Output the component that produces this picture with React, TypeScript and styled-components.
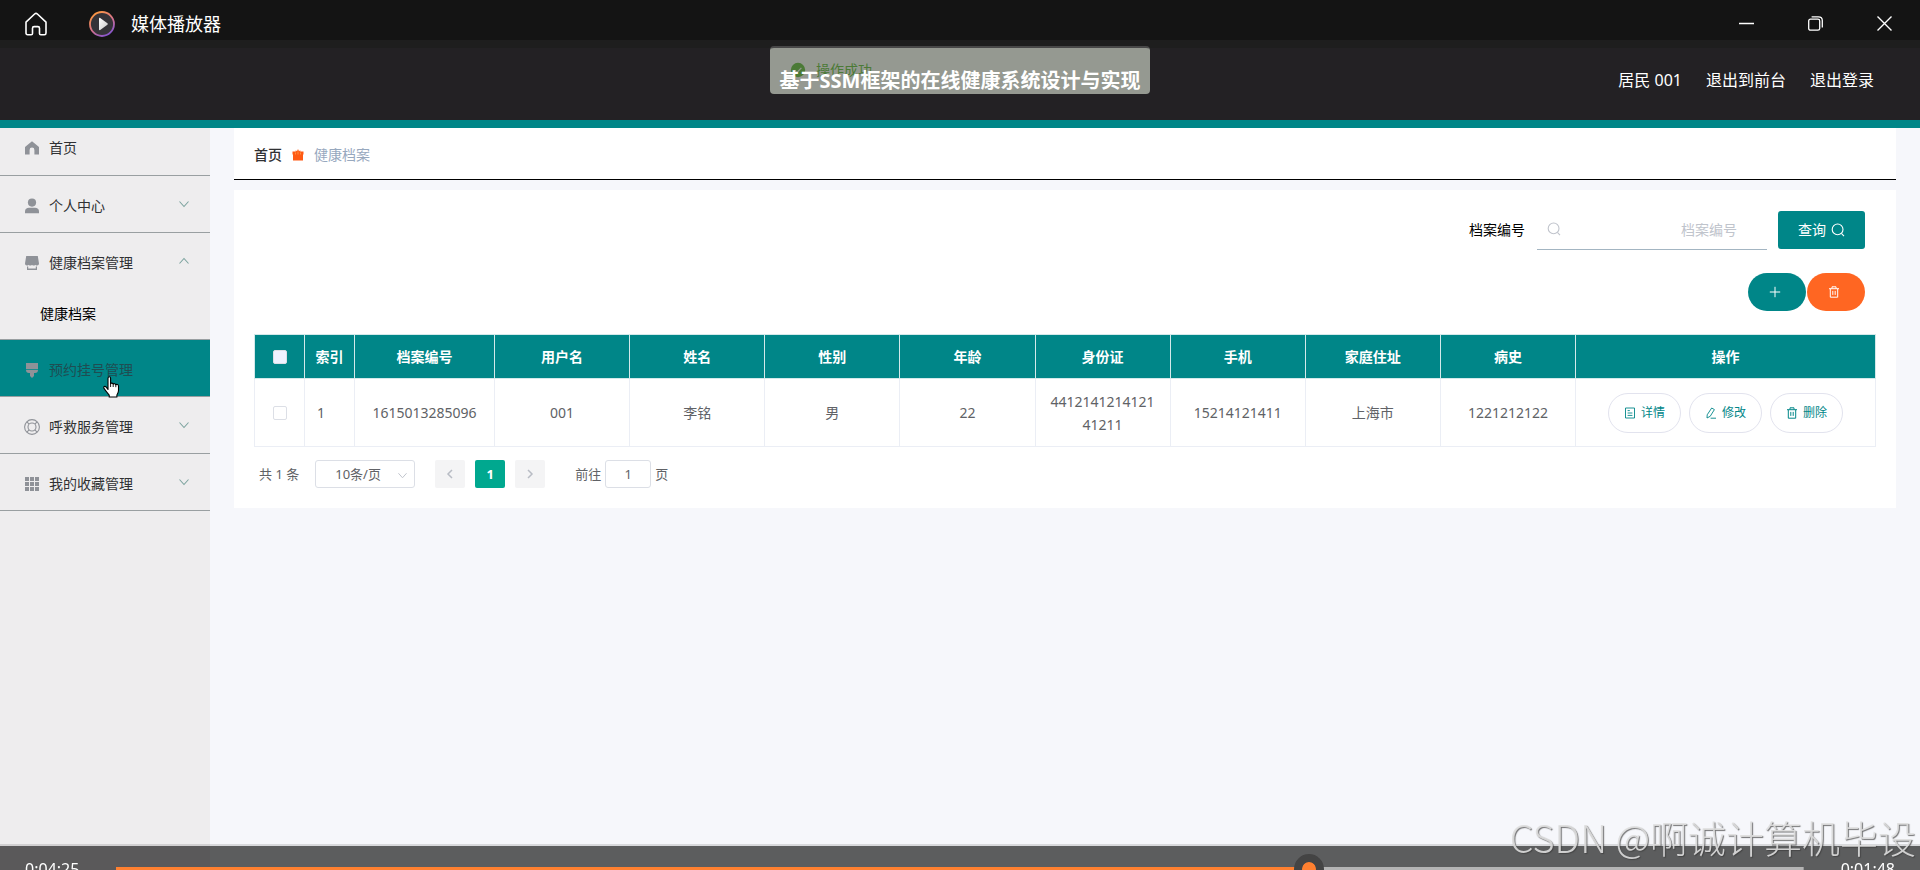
import React from "react";
import styled, { createGlobalStyle } from "styled-components";

const TEAL = "#008688";

const GlobalStyle = createGlobalStyle`
  *, *::before, *::after { box-sizing: border-box; }
  body {
    margin: 0;
    font-family: "Noto Sans", "Noto Sans CJK SC", sans-serif;
    font-size: 14px;
    line-height: 20px;
    color: #303133;
    background: #f6f7fb;
  }
  button, input, select { font: inherit; margin: 0; }
  button { padding: 0; border: 0; background: none; cursor: pointer; }
  a { color: inherit; text-decoration: none; }
  ul { list-style: none; margin: 0; padding: 0; }
  svg { display: block; flex: none; }
`;

const Page = styled.div`
  position: relative;
  display: flex;
  flex-direction: column;
  min-height: 100vh;
`;

/* player window */

const TitleBar = styled.div`
  display: flex;
  align-items: center;
  height: 48px;
  padding: 7px 28px 0 25px;
  background: #141414;
  border-bottom: 8px solid #1e1e1e;
  color: #fff;
`;

const AppName = styled.span`
  display: flex;
  align-items: center;
  gap: 16px;
  margin-left: 42px;
  font-size: 18px;
  line-height: 24px;
`;

const WindowControls = styled.div`
  display: flex;
  gap: 54px;
  margin-left: auto;
`;

const TitleButton = styled.button`
  color: #fff;
`;

const PlayerBar = styled.div`
  position: fixed;
  left: 0;
  right: 0;
  bottom: 0;
  height: 26px;
  overflow: hidden;
  border-top: 2px solid rgba(0, 0, 0, 0.12);
  background: rgba(16, 16, 16, 0.67);
  background-clip: padding-box;
`;

const PlayerRow = styled.div`
  display: flex;
  align-items: center;
  gap: 37px;
  height: 30px;
  margin-top: 8px;
  padding: 0 25px;
  color: #fff;
  font-size: 16px;
  line-height: 24px;
`;

const Seek = styled.input`
  flex: 1;
  min-width: 0;
  height: 30px;
  appearance: none;
  background: linear-gradient(90deg, #ff8030 71%, #b4b4b4 71%) center / 100% 4px no-repeat;

  &::-webkit-slider-thumb {
    appearance: none;
    width: 30px;
    height: 30px;
    border: 8px solid #444;
    border-radius: 50%;
    background: #ff8030;
    background-clip: padding-box;
    box-shadow: inset 0 0 0 8px #ff8030;
  }
`;

const Watermark = styled.div`
  position: fixed;
  right: 4px;
  bottom: 9px;
  font-family: "Noto Sans CJK SC", sans-serif;
  font-size: 38px;
  font-weight: 300;
  line-height: 48px;
  color: rgba(222, 222, 222, 0.9);
  text-shadow: 1px 1px 1px rgba(60, 60, 60, 0.7);
  pointer-events: none;
`;

/* application header */

const Header = styled.header`
  display: grid;
  grid-template-columns: 1fr auto 1fr;
  align-items: center;
  height: 80px;
  padding: 0 46px 6px;
  background: #232124;
  border-bottom: 8px solid ${TEAL};
  color: #fff;
`;

const Title = styled.h1`
  position: relative;
  z-index: 2;
  grid-column: 2;
  margin: 0;
  font-size: 20px;
  line-height: 30px;
`;

const UserNav = styled.nav`
  display: flex;
  justify-content: flex-end;
  gap: 24px;
  padding-bottom: 2px;
  font-size: 16px;
`;

const Toast = styled.div`
  position: absolute;
  z-index: 1;
  top: 46px;
  left: 50%;
  width: 380px;
  height: 48px;
  margin-left: -190px;
  padding: 12px 0 0 20px;
  display: flex;
  align-items: flex-start;
  gap: 10px;
  border-top: 2px solid #484848;
  border-radius: 4px;
  background: #959991;
  color: #4b7a36;

  svg { margin-top: 2px; }
`;

/* sidebar */

const Body = styled.div`
  display: flex;
  flex: 1;
`;

const Sidebar = styled.nav`
  flex: none;
  width: 210px;
  background: #eeedee;
`;

const MenuItem = styled.li<{ $active?: boolean }>`
  position: relative;
  border-bottom: 1px solid #999fa1;
  background: ${(p) => (p.$active ? TEAL : "transparent")};
  color: ${(p) => (p.$active ? "#1f4d52" : "#303133")};
`;

const MenuLink = styled.a<{ $first?: boolean }>`
  display: flex;
  align-items: center;
  gap: 9px;
  height: ${(p) => (p.$first ? 47 : 56)}px;
  padding: ${(p) => (p.$first ? "0 21px 7px 24px" : "3px 21px 0 24px")};

  > svg:first-child { color: #8f9298; }
  > svg:last-child { margin: -4px 0 0 auto; color: #7da49f; }
`;

const SubLink = styled.a`
  display: flex;
  align-items: center;
  height: 50px;
  padding-left: 40px;
  color: #000;
`;

const HandCursor = styled.svg`
  position: absolute;
  left: 102px;
  top: 36px;
`;

/* content */

const Main = styled.main`
  flex: 1;
  min-width: 0;
  padding: 0 24px 60px;
`;

const Breadcrumb = styled.nav`
  display: flex;
  align-items: center;
  gap: 10px;
  height: 52px;
  padding: 2px 20px 0;
  margin-bottom: 10px;
  background: #fff;
  border-bottom: 1px solid #000;
`;

const Current = styled.span`
  color: #97a8be;
`;

const Home = styled.a`
  font-weight: 500;
`;

const Card = styled.section`
  padding: 21px 20px 20px;
  background: #fff;
`;

const Toolbar = styled.div`
  display: flex;
  align-items: center;
  justify-content: flex-end;
  height: 38px;
  margin-bottom: 24px;
  padding-right: 11px;
`;

const SearchLabel = styled.label`
  margin-right: 12px;
  color: #000;
`;

const SearchBox = styled.div`
  position: relative;
  width: 230px;
  margin-right: 11px;
  color: #c0c4cc;

  svg { position: absolute; left: 10px; top: 11px; }
`;

const SearchInput = styled.input`
  display: block;
  width: 100%;
  height: 39px;
  padding: 0 30px;
  border: 0;
  border-bottom: 1px solid #a3b5c2;
  background: transparent;
  text-align: right;

  &::placeholder { color: #c0c4cc; }
`;

const QueryButton = styled.button`
  display: flex;
  align-items: center;
  justify-content: center;
  gap: 5px;
  width: 87px;
  height: 38px;
  border-radius: 3px;
  background: ${TEAL};
  color: #fff;
`;

const PillButton = styled.button<{ $color: string }>`
  display: flex;
  align-items: center;
  justify-content: center;
  width: 58px;
  height: 38px;
  margin-left: 1px;
  padding-right: 4px;
  border-radius: 20px;
  background: ${(p) => p.$color};
  color: #fff;
`;

const Table = styled.table`
  width: 100%;
  margin-top: -1px;
  table-layout: fixed;
  border-collapse: collapse;
  text-align: center;

  th {
    height: 44px;
    padding: 0;
    border: 1px solid #d3e9ea;
    background: ${TEAL};
    color: #fff;
    font-weight: 700;
  }
  td {
    height: 68px;
    padding: 0 12px;
    border: 1px solid #ebeef5;
    color: #606266;
    line-height: 23px;
    word-break: break-all;
  }
`;

const Col = styled.col<{ $w?: number }>`
  width: ${(p) => (p.$w ? `${p.$w}px` : "auto")};
`;

const IndexCell = styled.td`
  text-align: left;
`;

const Check = styled.input<{ $onTeal?: boolean }>`
  appearance: none;
  display: block;
  width: 14px;
  height: 14px;
  margin: 0 auto !important;
  border: 1px solid #dcdfe6;
  border-radius: 2px;
  background: ${(p) => (p.$onTeal ? "#eef2ff" : "#fff")};
`;

const Actions = styled.div`
  display: flex;
  justify-content: center;
  gap: 8px;
`;

const ActionButton = styled.button`
  display: flex;
  align-items: center;
  justify-content: center;
  gap: 5px;
  width: 73px;
  height: 40px;
  border: 1px solid #e2e3ee;
  border-radius: 20px;
  color: ${TEAL};
  font-size: 12px;
`;

const Pager = styled.div`
  display: flex;
  align-items: center;
  height: 28px;
  margin-top: 13px;
  padding-left: 5px;
  color: #606266;
  font-size: 13px;
`;

const SizeBox = styled.div`
  position: relative;
  width: 100px;
  margin: 0 20px 0 16px;
  color: #c0c4cc;

  svg { position: absolute; right: 8px; top: 11px; }
`;

const SizeSelect = styled.select`
  display: block;
  appearance: none;
  width: 100%;
  height: 28px;
  padding: 0 20px 0 19px;
  border: 1px solid #dcdfe6;
  border-radius: 3px;
  background: #fff;
  color: #606266;
  text-align: left;
`;

const PageButton = styled.button<{ $current?: boolean }>`
  display: flex;
  align-items: center;
  justify-content: center;
  width: 30px;
  height: 28px;
  margin-right: 10px;
  border-radius: 2px;
  background: ${(p) => (p.$current ? "#00a88f" : "#f4f4f5")};
  color: ${(p) => (p.$current ? "#fff" : "#b8bcc4")};
  font-weight: 700;
`;

const Jump = styled.label`
  display: flex;
  align-items: center;
  gap: 4px;
  margin-left: 20px;
`;

const JumpInput = styled.input`
  width: 46px;
  height: 28px;
  border: 1px solid #dcdfe6;
  border-radius: 3px;
  color: #606266;
  text-align: center;
`;

/* icons */

const Chevron = ({ dir = "down", size = 10 }: { dir?: "down" | "up" | "left" | "right"; size?: number }) => {
  const paths = {
    down: "M0.5 2.5 5 7.5 9.5 2.5",
    up: "M0.5 7.5 5 2.5 9.5 7.5",
    left: "M7 1 3 5 7 9",
    right: "M3 1 7 5 3 9",
  };
  const heavy = dir === "left" || dir === "right";
  return (
    <svg width={size} height={size} viewBox="0 0 10 10" fill="none" stroke="currentColor" strokeWidth={heavy ? 1.5 : 1.1}>
      <path d={paths[dir]} />
    </svg>
  );
};

const SearchIcon = () => (
  <svg width="14" height="14" viewBox="0 0 14 14" fill="none" stroke="currentColor" strokeWidth="1.1">
    <circle cx="6.6" cy="6.4" r="5.4" />
    <path d="m10.4 10.4 2.6 2.8" />
  </svg>
);

const TrashIcon = ({ size = 12 }: { size?: number }) => (
  <svg width={size} height={size} viewBox="0 0 12 12" fill="none" stroke="currentColor">
    <path d="M1 2.7h10M4 2.5V.8h4v1.7M2.3 2.9v8.3h7.4V2.9M4.8 4.9v4M7.2 4.9v4" />
  </svg>
);

const DetailIcon = () => (
  <svg width="12" height="12" viewBox="0 0 12 12" fill="none" stroke="currentColor">
    <path d="M1.5 1h9v10h-9zM3.6 3.6h2.2M3.6 6h4.8M3.6 8.4h4.8" strokeWidth="0.9" />
  </svg>
);

const EditIcon = () => (
  <svg width="12" height="12" viewBox="0 0 12 12" fill="none" stroke="currentColor" strokeWidth="0.9">
    <path d="M6.7 1 9.4 2.6 5.2 9.3 2 11 2.2 7.8zM5.6 11.2H11" />
  </svg>
);

const menuIcons: Record<string, React.ReactNode> = {
  home: <path fill="currentColor" d="M8 1.2 15 7v7.6h-4.6V10a2.4 2.4 0 0 0-4.8 0v4.6H1V7z" />,
  user: (
    <g fill="currentColor">
      <circle cx="8" cy="4.6" r="4.1" />
      <path d="M1 15.2v-2C1 11 2.6 9.8 5 9.8h6c2.4 0 4 1.2 4 3.4v2z" />
    </g>
  ),
  shop: (
    <g fill="currentColor">
      <path d="M2.2 1h11.6L15 8.5c0 1.3-.9 2-1.9 2s-1.7-.8-1.7-.8-.8.8-1.7.8S8 9.7 8 9.7s-.8.8-1.7.8-1.7-.8-1.7-.8-.7.8-1.7.8-1.9-.7-1.9-2z" />
      <path d="M3 11.6h1.2v2h7.6v-2H13V15H3z" />
    </g>
  ),
  brush: (
    <path fill="currentColor" d="M2 1h12v6.2H2zM2 8h12c0 2-1 3-3 3h-1v3l-2 2-2-2v-3H5c-2 0-3-1-3-3z" />
  ),
  help: (
    <g fill="none" stroke="currentColor" strokeWidth="1.1">
      <circle cx="8" cy="8" r="7.4" />
      <circle cx="8" cy="8" r="4" />
      <path d="m2.8 2.8 2.4 2.4M13.2 2.8l-2.4 2.4M2.8 13.2l2.4-2.4M13.2 13.2l-2.4-2.4" />
    </g>
  ),
  grid: (
    <path
      fill="currentColor"
      d="M1 1h4v4H1zM6 1h4v4H6zM11 1h4v4h-4zM1 6h4v4H1zM6 6h4v4H6zM11 6h4v4h-4zM1 11h4v4H1zM6 11h4v4H6zM11 11h4v4h-4z"
    />
  ),
};

const MenuIcon = ({ name }: { name: string }) => (
  <svg width="16" height="16" viewBox="0 0 16 16">{menuIcons[name]}</svg>
);

type Entry = { icon: string; label: string; arrow?: "down" | "up"; child?: string; active?: boolean };

const menu: Entry[] = [
  { icon: "home", label: "首页" },
  { icon: "user", label: "个人中心", arrow: "down" },
  { icon: "shop", label: "健康档案管理", arrow: "up", child: "健康档案" },
  { icon: "brush", label: "预约挂号管理", active: true },
  { icon: "help", label: "呼救服务管理", arrow: "down" },
  { icon: "grid", label: "我的收藏管理", arrow: "down" },
];

const fields = ["档案编号", "用户名", "姓名", "性别", "年龄", "身份证", "手机", "家庭住址", "病史"];
const record = ["1615013285096", "001", "李铭", "男", "22", "441214121412141211", "15214121411", "上海市", "1221212122"];

export default function App() {
  return (
    <Page>
      <GlobalStyle />
      <TitleBar>
        <TitleButton aria-label="主页">
          <svg width="22" height="24" viewBox="0 0 22 24" fill="none" stroke="currentColor" strokeWidth="1.6" strokeLinejoin="round">
            <path d="M1 10.2 9.6 2c.9-.8 1.9-.8 2.8 0L21 10.2V21c0 1-.6 1.7-1.6 1.7h-3.6c-.8 0-1.3-.5-1.3-1.3v-5.2c0-1-.6-1.6-1.6-1.6H9.1c-1 0-1.6.6-1.6 1.6v5.2c0 .8-.5 1.3-1.3 1.3H2.6C1.6 22.7 1 22 1 21z" />
          </svg>
        </TitleButton>
        <AppName>
          <svg width="26" height="26" viewBox="0 0 26 26">
            <defs>
              <linearGradient id="ring" x1="0.2" y1="0" x2="0.8" y2="1">
                <stop offset="0" stopColor="#ff9a3c" />
                <stop offset="0.5" stopColor="#d9748a" />
                <stop offset="1" stopColor="#7d52d6" />
              </linearGradient>
              <linearGradient id="play" x1="0" y1="0" x2="1" y2="1">
                <stop offset="0" stopColor="#fff" />
                <stop offset="1" stopColor="#c8c8c8" />
              </linearGradient>
            </defs>
            <circle cx="13" cy="13" r="12" fill="#343338" stroke="url(#ring)" strokeWidth="1.8" />
            <path d="M10 7.6c0-.7.6-1 1.2-.7l7.2 5.4c.5.4.5 1 0 1.4l-7.2 5.4c-.6.3-1.2 0-1.2-.7z" fill="url(#play)" />
          </svg>
          媒体播放器
        </AppName>
        <WindowControls>
          <TitleButton aria-label="最小化">
            <svg width="15" height="15" viewBox="0 0 15 15" stroke="currentColor" strokeWidth="1.5"><path d="M0 7.5h15" /></svg>
          </TitleButton>
          <TitleButton aria-label="还原">
            <svg width="15" height="15" viewBox="0 0 15 15" fill="none" stroke="currentColor" strokeWidth="1.3">
              <rect x="0.7" y="3.2" width="11" height="11" rx="1.8" />
              <path d="M3.6.8h6.8c2.3 0 3.9 1.5 3.9 3.8v6.8" />
            </svg>
          </TitleButton>
          <TitleButton aria-label="关闭">
            <svg width="15" height="15" viewBox="0 0 15 15" stroke="currentColor" strokeWidth="1.4"><path d="m.5.5 14 14M14.5.5l-14 14" /></svg>
          </TitleButton>
        </WindowControls>
      </TitleBar>

      <Header>
        <Title>基于SSM框架的在线健康系统设计与实现</Title>
        <UserNav>
          <span>居民 001</span>
          <a href="#front">退出到前台</a>
          <a href="#logout">退出登录</a>
        </UserNav>
      </Header>
      <Toast role="status">
        <svg width="16" height="16" viewBox="0 0 16 16">
          <circle cx="8" cy="8" r="7.2" fill="currentColor" />
          <path d="m4.6 8.2 2.4 2.3 4.4-4.6" fill="none" stroke="#959991" strokeWidth="1.2" />
        </svg>
        操作成功
      </Toast>

      <Body>
        <Sidebar>
          <ul>
            {menu.map((m, i) => (
              <MenuItem key={m.label} $active={m.active}>
                <MenuLink href="#menu" $first={i === 0}>
                  <MenuIcon name={m.icon} />
                  <span>{m.label}</span>
                  {m.arrow && <Chevron dir={m.arrow} />}
                </MenuLink>
                {m.child && <SubLink href="#records">{m.child}</SubLink>}
                {m.active && (
                  <HandCursor width="18" height="22" viewBox="0 0 18 22" fill="#fff" stroke="#000" strokeWidth="1.1" strokeLinejoin="round">
                    <path d="M6 13.5V2.3C6 .3 8.6.3 8.6 2.3v5.5c.2-1 2.4-1 2.6.4.5-.9 2.4-.6 2.6.6.7-.7 2.6-.4 2.7 1.2v4.5c0 2.2-1.2 3.4-1.6 4.5v2H7.2v-1.8C5.4 17 3.4 14.6 2 12.4c-1-1.8.9-2.7 2.2-1.3z" />
                    <path d="M8.6 7.8v3.2M11.2 8.2v2.8M13.8 8.8v2.4" fill="none" strokeWidth="0.9" />
                  </HandCursor>
                )}
              </MenuItem>
            ))}
          </ul>
        </Sidebar>

        <Main>
          <Breadcrumb>
            <Home href="#home">首页</Home>
            <svg width="12" height="12" viewBox="0 0 12 12">
              <path d="M.5 2.6h3.2V1.2L5 2.200 6 0l1 2.200 1.300-1v1.400h3.200v2.800H11v6.100H1V5.400H.5z" fill="#ff5a14" />
              <path d="M3.500 3.500v2M6 2.500v3M8.500 3.500v2" stroke="#ffa04a" strokeWidth="0.8" />
            </svg>
            <Current>健康档案</Current>
          </Breadcrumb>

          <Card>
            <Toolbar>
              <SearchLabel htmlFor="record-no">档案编号</SearchLabel>
              <SearchBox>
                <SearchIcon />
                <SearchInput id="record-no" placeholder="档案编号" />
              </SearchBox>
              <QueryButton>查询<SearchIcon /></QueryButton>
            </Toolbar>
            <Toolbar>
              <PillButton $color={TEAL} aria-label="新增">
                <svg width="12" height="12" viewBox="0 0 12 12" stroke="currentColor"><path d="M6 .8v10.4M.8 6h10.4" /></svg>
              </PillButton>
              <PillButton $color="#ff6622" aria-label="删除"><TrashIcon /></PillButton>
            </Toolbar>

            <Table>
              <colgroup>
                <Col $w={50} />
                <Col $w={50} />
                <Col $w={140} />
                {fields.slice(1).map((f) => <Col key={f} />)}
                <Col $w={300} />
              </colgroup>
              <thead>
                <tr>
                  <th><Check type="checkbox" $onTeal aria-label="全选" /></th>
                  <th>索引</th>
                  {fields.map((f) => <th key={f}>{f}</th>)}
                  <th>操作</th>
                </tr>
              </thead>
              <tbody>
                <tr>
                  <td><Check type="checkbox" aria-label="选择第1行" /></td>
                  <IndexCell>1</IndexCell>
                  {record.map((v) => <td key={v}>{v}</td>)}
                  <td>
                    <Actions>
                      <ActionButton><DetailIcon />详情</ActionButton>
                      <ActionButton><EditIcon />修改</ActionButton>
                      <ActionButton><TrashIcon />删除</ActionButton>
                    </Actions>
                  </td>
                </tr>
              </tbody>
            </Table>

            <Pager>
              <span>共 1 条</span>
              <SizeBox>
                <SizeSelect aria-label="每页条数" defaultValue="10">
                  <option value="10">10条/页</option>
                  <option value="20">20条/页</option>
                </SizeSelect>
                <Chevron size={9} />
              </SizeBox>
              <PageButton aria-label="上一页"><Chevron dir="left" /></PageButton>
              <PageButton $current>1</PageButton>
              <PageButton aria-label="下一页"><Chevron dir="right" /></PageButton>
              <Jump>
                前往
                <JumpInput defaultValue="1" />
                页
              </Jump>
            </Pager>
          </Card>
        </Main>
      </Body>

      <PlayerBar>
        <PlayerRow>
          <span>0:04:25</span>
          <Seek type="range" min={0} max={373} defaultValue={265} aria-label="播放进度" />
          <span>0:01:48</span>
        </PlayerRow>
      </PlayerBar>
      <Watermark>CSDN @啊诚计算机毕设</Watermark>
    </Page>
  );
}
